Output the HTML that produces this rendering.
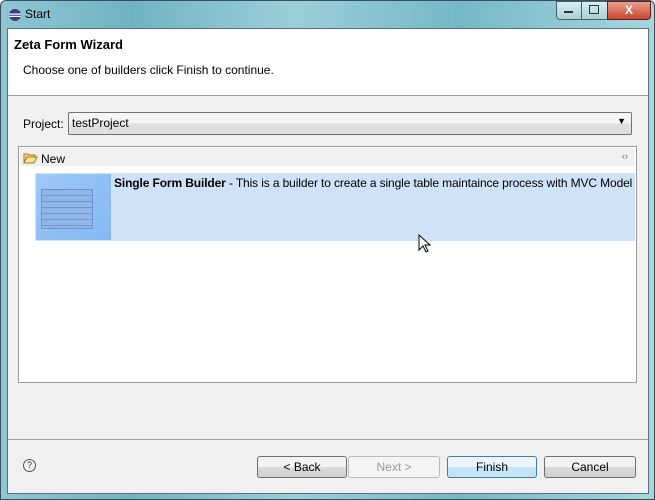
<!DOCTYPE html><html><head><style>
body{margin:0;width:655px;height:500px;overflow:hidden;font-family:"Liberation Sans",sans-serif;font-size:12px;background:#fff}
.frame{position:absolute;left:0;top:0;width:653px;height:498px;border:1px solid #3a4f5c;border-radius:6px 6px 0 0;background:linear-gradient(90deg,#8fc6d2,#6fb3c3 20%,#9bcfd9 45%,#74b8c7 70%,#a7d6df)}
.client{position:absolute;left:7px;top:28px;width:640px;height:464px;background:#f0f0f0;outline:1px solid #56707c}
.hdr{position:absolute;left:0;top:0;width:640px;height:66px;background:#fff;border-bottom:1px solid #a0a0a0}
.abs{position:absolute}
.btn{position:absolute;top:427px;height:20px;border:1px solid #707070;border-radius:3px;background:linear-gradient(#f2f2f2 50%,#dcdcdc 50%,#cfcfcf);text-align:center;line-height:20px;font-size:12px}
</style></head><body>
<div class="frame">
<svg class="abs" style="left:7px;top:7px" width="14" height="14"><circle cx="7" cy="7" r="6" fill="#3a3f80"/><rect x="1" y="5.5" width="12" height="1.2" fill="#fff"/><rect x="1" y="7.8" width="12" height="1.2" fill="#fff"/></svg>
<div class="abs" style="left:24px;top:6px;font-size:12px">Start</div>
<div class="abs" style="left:555px;top:0;width:25px;height:17px;border:1px solid #466;border-radius:0 0 0 4px;background:linear-gradient(#d8eef2,#a9cfd8)"></div>
<div class="abs" style="left:580px;top:0;width:26px;height:17px;border:1px solid #466;background:linear-gradient(#d8eef2,#a9cfd8)"></div>
<div class="abs" style="left:606px;top:0;width:42px;height:17px;border:1px solid #622;border-radius:0 0 4px 0;background:linear-gradient(#e8a090,#c8452c);color:#fff;font-weight:bold;text-align:center;line-height:16px">X</div>
<div class="abs" style="left:563px;top:10px;width:9px;height:2px;background:#333"></div>
<div class="abs" style="left:588px;top:4px;width:8px;height:7px;border:1px solid #333"></div>
<div class="client">
<div class="hdr">
<div class="abs" style="left:6px;top:8px;font-size:13px;font-weight:bold">Zeta Form Wizard</div>
<div class="abs" style="left:15px;top:34px">Choose one of builders click Finish to continue.</div>
</div>
<div class="abs" style="left:15px;top:88px">Project:</div>
<div class="abs" style="left:60px;top:83px;width:562px;height:21px;border:1px solid #707070;border-radius:2px;background:linear-gradient(#f5f5f5 50%,#e0e0e0 50%)"><span style="position:absolute;left:3px;top:3px">testProject</span><span style="position:absolute;right:5px;top:3px;font-size:9px">▼</span></div>
<div class="abs" style="left:10px;top:117px;width:617px;height:235px;border:1px solid #9a9a9a;background:#fff">
<div class="abs" style="left:1px;top:1px;width:615px;height:18px;background:#f0f0f0"></div>
<svg class="abs" style="left:4px;top:5px" width="15" height="12"><path d="M1 2h4l1 1h6v2H4L1 11z" fill="#f3d27a" stroke="#a57a1e"/><path d="M1 11l3-6h10l-3 6z" fill="#fbe39a" stroke="#a57a1e"/></svg>
<div class="abs" style="left:22px;top:5px">New</div>
<div class="abs" style="left:603px;top:4px;font-size:9px;color:#666">‹›</div>
<div class="abs" style="left:16px;top:26px;width:600px;height:68px;background:#cfe2f8"></div>
<div class="abs" style="left:17px;top:27px;width:75px;height:66px;background:linear-gradient(135deg,#9ec8f7,#85b8f3)"></div>
<div class="abs" style="left:22px;top:42px;width:50px;height:38px;background:repeating-linear-gradient(#8fb6e6 0 5px,#6f9ad0 5px 6px);border:1px solid #6a95cc"></div>
<div class="abs" style="left:95px;top:29px;white-space:nowrap;letter-spacing:-0.12px"><b>Single Form Builder</b> - This is a builder to create a single table maintaince process with MVC Model</div>
</div>
<svg class="abs" style="left:410px;top:205px" width="14" height="20"><path d="M1 1v15l4-4 3 6 2-1-3-6h5z" fill="#fff" stroke="#000"/></svg>
<div class="abs" style="left:0;top:410px;width:640px;height:1px;background:#a0a0a0"></div>
<div class="abs" style="left:15px;top:430px;width:11px;height:11px;border:1px solid #555;border-radius:50%;font-size:9px;text-align:center;line-height:11px;color:#333">?</div>
<div class="btn" style="left:249px;width:88px">&lt; Back</div>
<div class="btn" style="left:340px;width:90px;color:#999;border-color:#bbb;background:#f4f4f4">Next &gt;</div>
<div class="btn" style="left:439px;width:88px;border-color:#3c7fb1;background:linear-gradient(#eaf6fd 50%,#c4e5f6 50%)">Finish</div>
<div class="btn" style="left:536px;width:90px">Cancel</div>
</div></div>
</body></html>
